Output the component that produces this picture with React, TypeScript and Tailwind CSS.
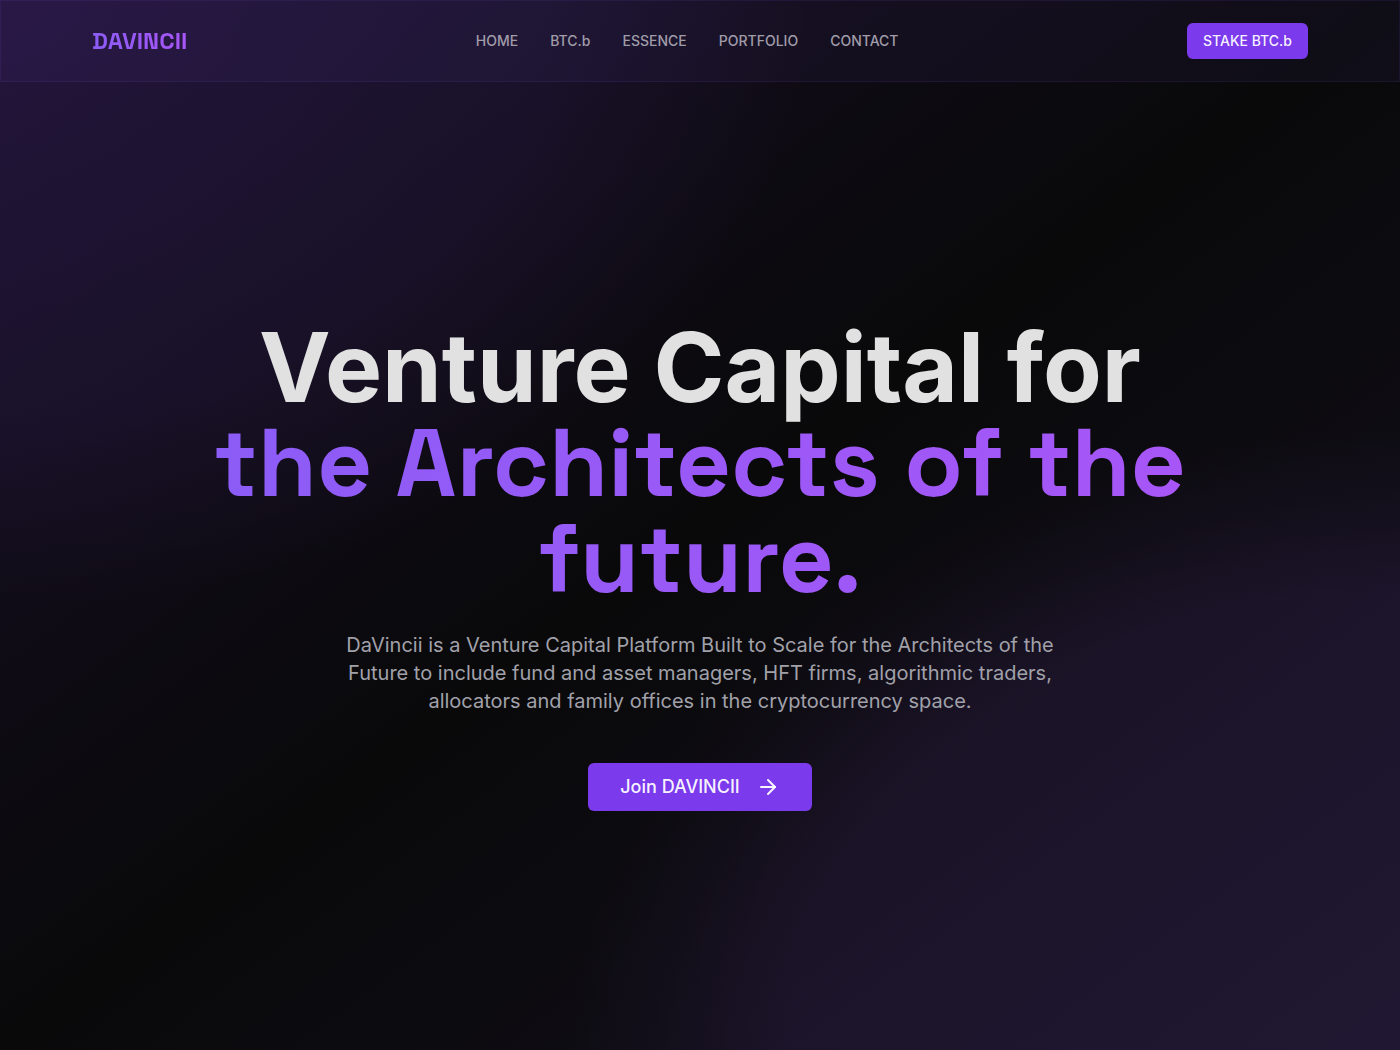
import { ArrowRight } from "lucide-react";

const links = [
  { label: "HOME", href: "#home" },
  { label: "BTC.b", href: "#btcb" },
  { label: "ESSENCE", href: "#essence" },
  { label: "PORTFOLIO", href: "#portfolio" },
  { label: "CONTACT", href: "#contact" },
];

function Header() {
  return (
    <header className="border border-[#8b5cf6]/10 bg-[#8b5cf6]/5">
      <div className="mx-auto flex h-20 max-w-7xl items-center justify-between px-8">
        <a
          href="#home"
          className="bg-linear-to-r from-[#8b5cf6] to-[#a855f7] bg-clip-text text-2xl font-bold text-transparent font-['Space_Grotesk','Liberation_Sans',sans-serif]"
        >
          DAVINCII
        </a>
        <nav className="flex items-center gap-8">
          {links.map((link) => (
            <a key={link.label} href={link.href} className="text-sm font-medium text-[#a09ca9]">
              {link.label}
            </a>
          ))}
        </nav>
        <button type="button" className="h-9 rounded-md bg-[#7c3aed] px-4 text-sm font-medium text-white/95">
          STAKE BTC.b
        </button>
      </div>
    </header>
  );
}

function Hero() {
  return (
    <main className="flex flex-1 flex-col items-center justify-center px-8 pb-0.5 text-center">
      <h1 className="max-w-5xl text-8xl leading-none font-bold text-[#e1e1e1]">
        <span className="block">Venture Capital for</span>
        <span className="block bg-linear-to-r from-[#8b5cf6] to-[#a855f7] bg-clip-text text-transparent font-['Space_Grotesk',Inter,sans-serif]">
          the Architects of the future.
        </span>
      </h1>
      <p className="mt-6 max-w-3xl text-xl leading-7 text-[#a1a1aa]">
        DaVincii is a Venture Capital Platform Built to Scale for the Architects of the Future to include fund and
        asset managers, HFT firms, algorithmic traders, allocators and family offices in the cryptocurrency space.
      </p>
      <button
        type="button"
        className="mt-12 flex h-12 items-center gap-4 rounded-md bg-[#7c3aed] px-8 text-lg font-medium text-white/95"
      >
        Join DAVINCII
        <ArrowRight className="size-6" aria-hidden="true" />
      </button>
    </main>
  );
}

export default function App() {
  return (
    <div className="flex min-h-screen flex-col bg-[#09090a] bg-[radial-gradient(ellipse_at_0%_0%,rgba(139,72,246,0.10),rgba(139,82,246,0.07)_28%,transparent_41%),radial-gradient(ellipse_at_100%_100%,rgba(155,92,246,0.09),rgba(155,92,246,0.09)_31%,rgba(155,92,246,0.03)_37%,transparent_42%),linear-gradient(to_bottom_right,rgba(124,58,237,0.13),transparent_50%,rgba(139,92,246,0.09))] font-['Inter',sans-serif]">
      <Header />
      <Hero />
    </div>
  );
}
